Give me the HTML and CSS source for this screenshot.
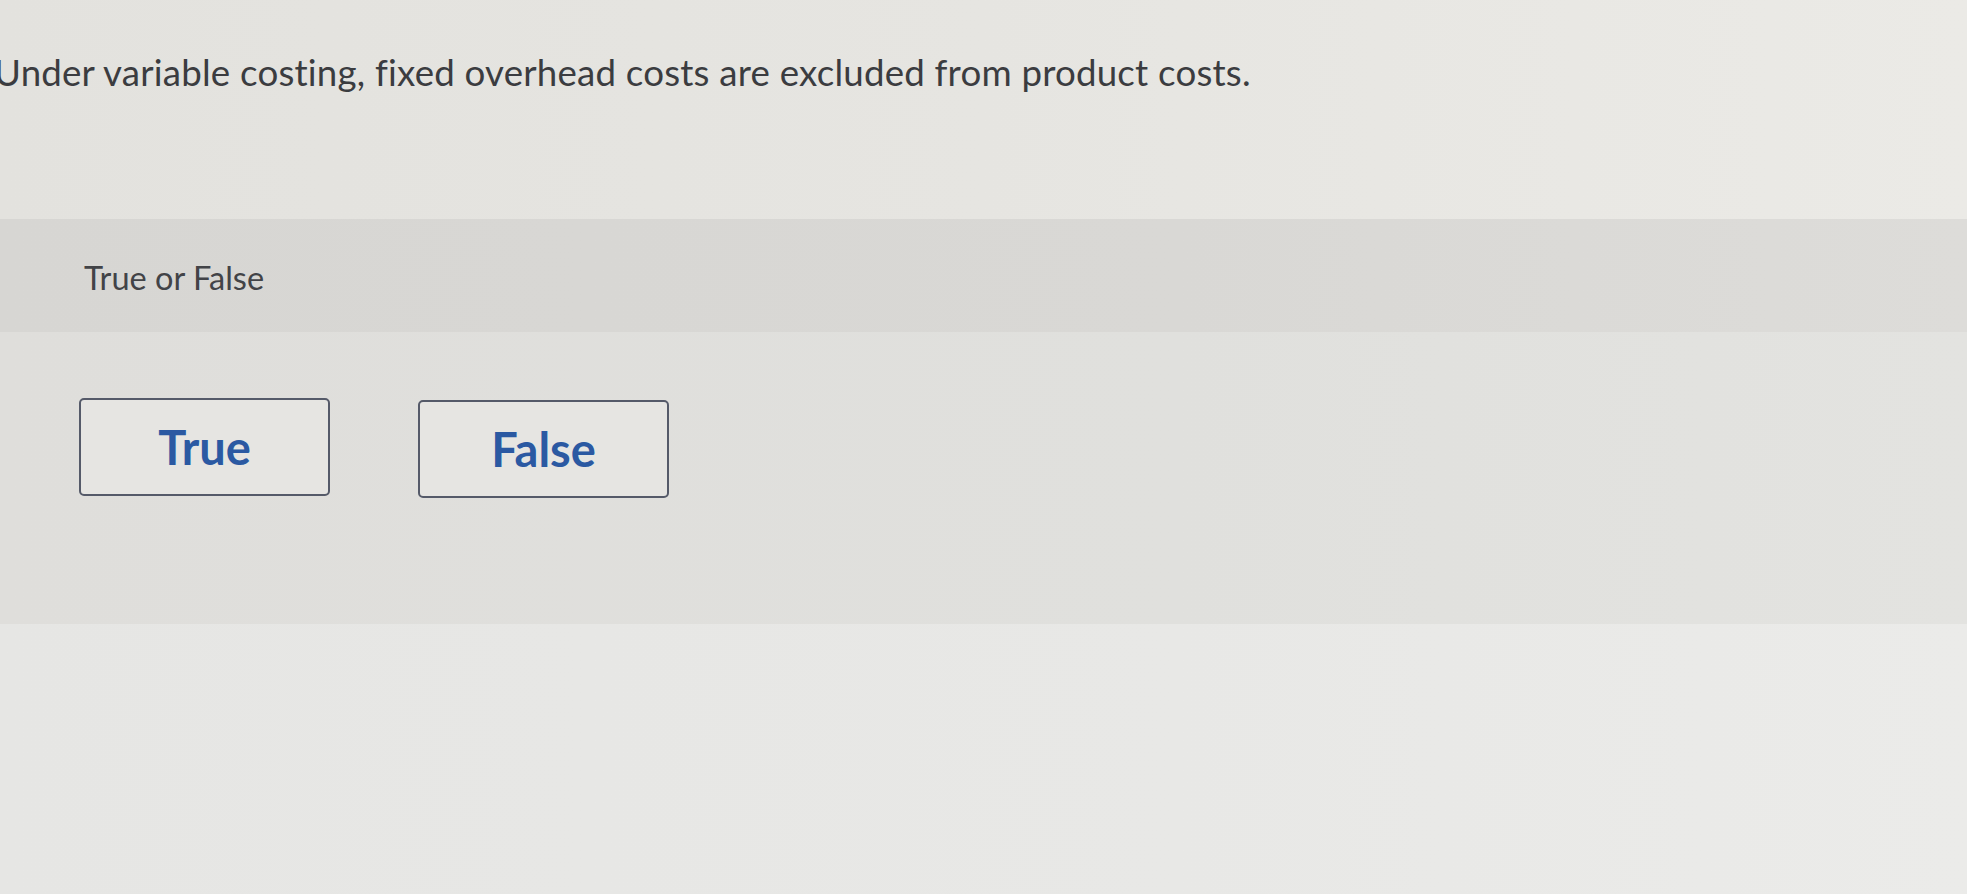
FILE: index.html
```html
<!DOCTYPE html>
<html lang="en">
<head>
<meta charset="utf-8">
<title>True or False</title>
<link rel="stylesheet" href="styles.css">
</head>
<body>
<div class="page">
  <section class="question">
    <p class="prompt">Under variable costing, fixed overhead costs are excluded from product costs.</p>
  </section>
  <section class="type-bar">
    <span class="type-label">True or False</span>
  </section>
  <section class="answers">
    <button class="choice">True</button>
    <button class="choice">False</button>
  </section>
  <section class="rest"></section>
</div>
</body>
</html>
```
FILE: styles.css
```css
html, body {
  margin: 0;
  padding: 0;
}
body {
  width: 1967px;
  height: 894px;
  overflow: hidden;
  background: #e7e7e4;
  font-family: Lato, "Open Sans", sans-serif;
}
.page {
  display: flex;
  flex-direction: column;
  height: 894px;
}
.question {
  height: 219px;
  box-sizing: border-box;
  padding-top: 47px;
  background: linear-gradient(90deg, #e3e2de 0%, #e6e5e1 50%, #ebeae6 100%);
}
.prompt {
  margin: 0;
  text-indent: -6px;
  font-size: 36.7px;
  line-height: 50px;
  color: #3b3c40;
  letter-spacing: 0.2px;
}
.type-bar {
  height: 113px;
  box-sizing: border-box;
  padding-left: 84px;
  display: flex;
  align-items: center;
  background: linear-gradient(90deg, #d7d6d3 0%, #d9d8d5 60%, #dddcd9 100%);
}
.type-label {
  font-size: 32.5px;
  color: #424347;
  margin-top: 4px;
}
.answers {
  height: 292px;
  box-sizing: border-box;
  padding: 66px 0 0 79px;
  display: flex;
  align-items: flex-start;
  gap: 88px;
  background: linear-gradient(90deg, #dfdedb 0%, #e0e0dd 60%, #e3e3e0 100%);
}
.choice {
  width: 251px;
  height: 98px;
  box-sizing: border-box;
  border: 2px solid #555a69;
  border-radius: 5px;
  background: #e6e5e2;
  color: #2b59a2;
  font-family: Lato, "Open Sans", sans-serif;
  font-weight: 700;
  font-size: 47px;
  padding: 0;
}
.choice + .choice {
  margin-top: 2px;
}
.rest {
  flex: 1;
  background: linear-gradient(90deg, #e6e6e4 0%, #e8e8e6 60%, #ebebe9 100%);
}
```
